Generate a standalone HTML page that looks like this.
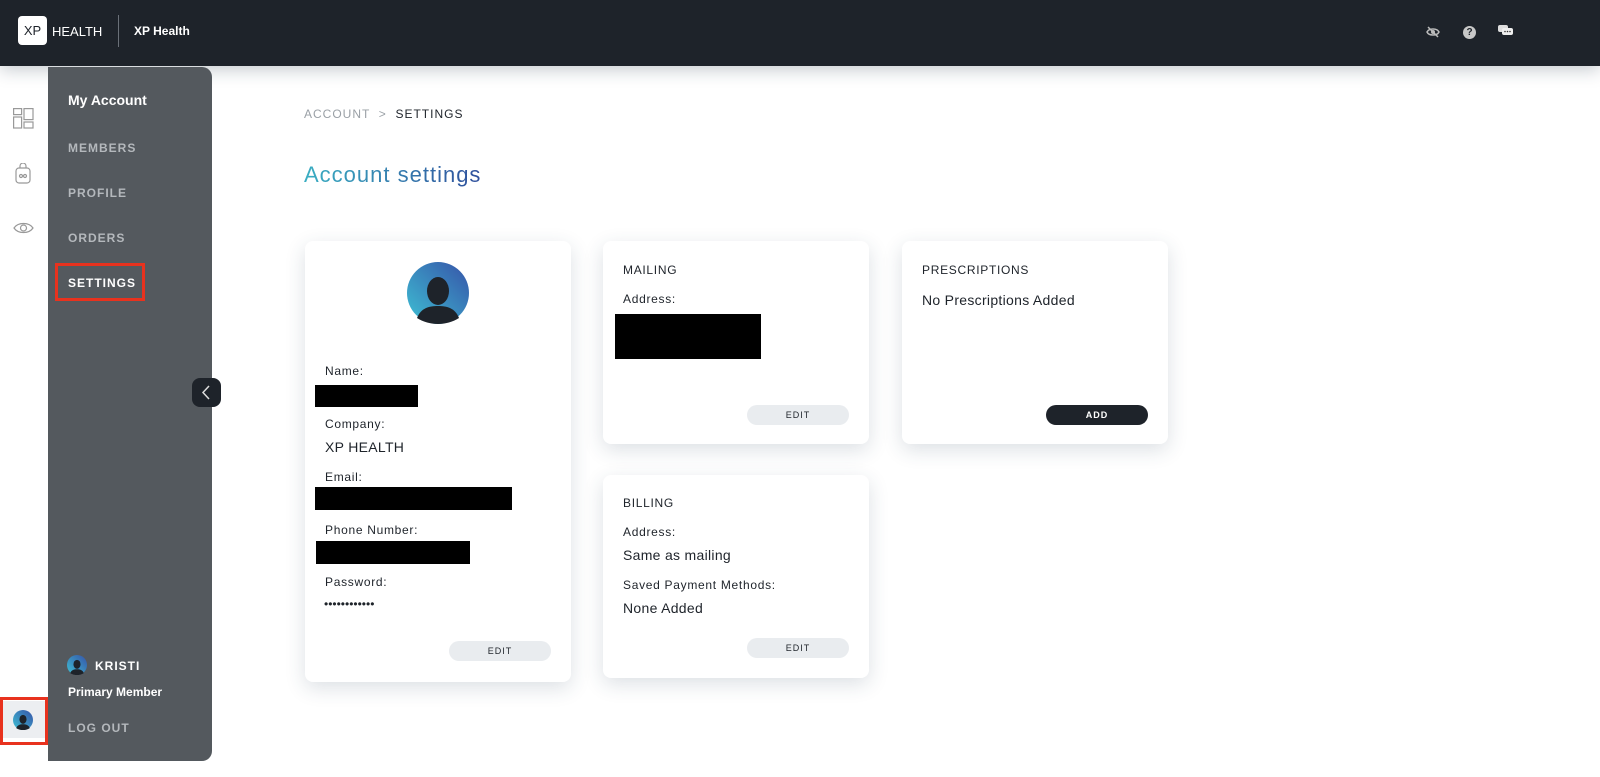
<!DOCTYPE html>
<html><head><meta charset="utf-8"><style>
*{box-sizing:border-box;margin:0;padding:0}
body{width:1600px;height:777px;overflow:hidden;background:#fff;font-family:"Liberation Sans",sans-serif;position:relative;color:#1e232a}
.hdr{position:absolute;left:0;top:0;width:1600px;height:66px;background:#1e232a;box-shadow:0 4px 16px rgba(30,50,70,.25)}
.logo{position:absolute;left:18px;top:16px;width:29px;height:29px;background:#fff;border-radius:4px;font-size:13px;color:#1e232a;text-align:center;line-height:29px}
.abs{position:absolute}
.side{position:absolute;left:48px;top:67px;width:164px;height:694px;background:#54595e;border-radius:0 10px 10px 0}
.nav{position:absolute;left:20px;font-size:12px;letter-spacing:1px;color:#b4b8bc;font-weight:bold}
.card{position:absolute;background:#fff;border-radius:8px;box-shadow:0 6px 20px rgba(40,60,90,.16)}
.lbl{position:absolute;font-size:12px;letter-spacing:.7px;color:#1e232a}
.val{position:absolute;font-size:14px;letter-spacing:.3px;color:#1e232a}
.blk{position:absolute;background:#000}
.btn{position:absolute;width:102px;height:20px;border-radius:10px;background:#e9ecef;font-size:9px;letter-spacing:1px;text-align:center;line-height:20px;color:#1e232a}
</style></head><body>
<div class="hdr">
 <div class="logo">XP</div>
 <div class="abs" style="left:52px;top:24px;color:#fff;font-size:13px">HEALTH</div>
 <div class="abs" style="left:118px;top:15px;width:1px;height:32px;background:#6a7078"></div>
 <div class="abs" style="left:134px;top:24px;color:#fff;font-size:12px;font-weight:bold">XP Health</div>
 <svg class="abs" style="left:1426px;top:26px" width="14" height="12" viewBox="0 0 14 12"><path d="M1 6C3 2 11 2 13 6C11 10 3 10 1 6Z" fill="none" stroke="#bbb" stroke-width="1.5"/><circle cx="7" cy="6" r="2" fill="#bbb"/><path d="M2 1L12 11" stroke="#bbb" stroke-width="1.5"/></svg>
 <div class="abs" style="left:1463px;top:26px;width:13px;height:13px;border-radius:50%;background:#c8c8c8;color:#1e232a;font-size:10px;font-weight:bold;text-align:center;line-height:13px">?</div>
 <svg class="abs" style="left:1498px;top:25px" width="16" height="13" viewBox="0 0 16 13"><rect x="0" y="0" width="10" height="7" rx="2" fill="#ddd"/><rect x="4" y="3" width="11" height="7" rx="2" fill="#eee"/><circle cx="7" cy="6.5" r=".8" fill="#333"/><circle cx="9.5" cy="6.5" r=".8" fill="#333"/><circle cx="12" cy="6.5" r=".8" fill="#333"/></svg>
</div>
<svg class="abs" style="left:13px;top:108px" width="21" height="21" viewBox="0 0 21 21" fill="none" stroke="#999" stroke-width="1.2"><rect x=".6" y=".6" width="8" height="6"/><rect x=".6" y="9" width="8" height="11"/><rect x="11" y=".6" width="9" height="11"/><rect x="11" y="14" width="9" height="6"/></svg>
<svg class="abs" style="left:15px;top:163px" width="16" height="21" viewBox="0 0 16 21" fill="none" stroke="#999" stroke-width="1.2"><path d="M5 5V3a3 3 0 0 1 6 0v2"/><rect x="1" y="5" width="14" height="15" rx="3"/><circle cx="6" cy="13" r="1.5"/><circle cx="10" cy="13" r="1.5"/></svg>
<svg class="abs" style="left:13px;top:221px" width="21" height="14" viewBox="0 0 21 14" fill="none" stroke="#999" stroke-width="1.2"><path d="M1 7C5 1 16 1 20 7C16 13 5 13 1 7Z"/><circle cx="10.5" cy="7" r="3"/></svg>
<div class="abs" style="left:2px;top:701px;width:45px;height:37px;background:#eceef1"></div>
<div class="abs" style="left:0;top:697px;width:48px;height:48px;border:3px solid #e8321e"></div>
<svg class="abs" style="left:13px;top:710px" width="20" height="20" viewBox="0 0 62 62"><defs><linearGradient id="g0" x1="0" y1="1" x2="1" y2="0"><stop offset="0" stop-color="#3ec0d4"/><stop offset="1" stop-color="#3653a8"/></linearGradient></defs><circle cx="31" cy="31" r="31" fill="url(#g0)"/><ellipse cx="31" cy="29" rx="11" ry="14" fill="#1e232a"/><path d="M10 56C14 46 22 44 31 44C40 44 48 46 52 56C46 60 38 62 31 62C24 62 16 60 10 56Z" fill="#1e232a"/></svg>
<div class="side">
 <div class="nav" style="top:25px;color:#fff;font-size:14px;letter-spacing:0">My Account</div>
 <div class="nav" style="top:74px">MEMBERS</div>
 <div class="nav" style="top:119px">PROFILE</div>
 <div class="nav" style="top:164px">ORDERS</div>
 <div class="nav" style="top:209px;color:#fff">SETTINGS</div>
 <div class="abs" style="left:7px;top:196px;width:90px;height:38px;border:3px solid #e8321e"></div>
 <svg class="abs" style="left:19px;top:588px" width="20" height="20" viewBox="0 0 62 62"><circle cx="31" cy="31" r="31" fill="url(#g0)"/><ellipse cx="31" cy="29" rx="11" ry="14" fill="#1e232a"/><path d="M10 56C14 46 22 44 31 44C40 44 48 46 52 56C46 60 38 62 31 62C24 62 16 60 10 56Z" fill="#1e232a"/></svg>
 <div class="nav" style="left:47px;top:592px;color:#fff">KRISTI</div>
 <div class="nav" style="top:618px;color:#fff;letter-spacing:0">Primary Member</div>
 <div class="nav" style="top:654px">LOG OUT</div>
</div>
<div class="abs" style="left:192px;top:378px;width:29px;height:29px;background:#1e232a;border-radius:8px"><svg width="29" height="29" viewBox="0 0 29 29"><path d="M17 8L11 14.5L17 21" fill="none" stroke="#ddd" stroke-width="1.5"/></svg></div>
<div class="abs" style="left:304px;top:107px;font-size:12px;letter-spacing:1px;color:#9aa0a6">ACCOUNT &nbsp;&gt;&nbsp; <span style="color:#1e232a">SETTINGS</span></div>
<div class="abs" style="left:304px;top:162px;font-size:22px;letter-spacing:1px;background:linear-gradient(90deg,#3aaec2,#2f4f9c);-webkit-background-clip:text;color:transparent;font-weight:500">Account settings</div>

<div class="card" style="left:305px;top:241px;width:266px;height:441px">
 <svg class="abs" style="left:102px;top:21px" width="62" height="62" viewBox="0 0 62 62"><circle cx="31" cy="31" r="31" fill="url(#g0)"/><ellipse cx="31" cy="29" rx="11" ry="14" fill="#1e232a"/><path d="M10 56C14 46 22 44 31 44C40 44 48 46 52 56C46 60 38 62 31 62C24 62 16 60 10 56Z" fill="#1e232a"/></svg>
 <div class="lbl" style="left:20px;top:123px">Name:</div>
 <div class="blk" style="left:10px;top:144px;width:103px;height:22px"></div>
 <div class="lbl" style="left:20px;top:176px">Company:</div>
 <div class="val" style="left:20px;top:198px">XP HEALTH</div>
 <div class="lbl" style="left:20px;top:229px">Email:</div>
 <div class="blk" style="left:10px;top:246px;width:197px;height:23px"></div>
 <div class="lbl" style="left:20px;top:282px">Phone Number:</div>
 <div class="blk" style="left:11px;top:300px;width:154px;height:23px"></div>
 <div class="lbl" style="left:20px;top:334px">Password:</div>
 <div class="val" style="left:19px;top:356px;font-size:12px;letter-spacing:0">••••••••••••</div>
 <div class="btn" style="left:144px;top:400px">EDIT</div>
</div>
<div class="card" style="left:603px;top:241px;width:266px;height:203px">
 <div class="lbl" style="left:20px;top:22px">MAILING</div>
 <div class="lbl" style="left:20px;top:51px">Address:</div>
 <div class="blk" style="left:12px;top:73px;width:146px;height:45px"></div>
 <div class="btn" style="left:144px;top:164px">EDIT</div>
</div>
<div class="card" style="left:902px;top:241px;width:266px;height:203px">
 <div class="lbl" style="left:20px;top:22px">PRESCRIPTIONS</div>
 <div class="val" style="left:20px;top:51px">No Prescriptions Added</div>
 <div class="btn" style="left:144px;top:164px;background:#1e232a;color:#fff;font-weight:bold">ADD</div>
</div>
<div class="card" style="left:603px;top:475px;width:266px;height:203px">
 <div class="lbl" style="left:20px;top:21px">BILLING</div>
 <div class="lbl" style="left:20px;top:50px">Address:</div>
 <div class="val" style="left:20px;top:72px">Same as mailing</div>
 <div class="lbl" style="left:20px;top:103px">Saved Payment Methods:</div>
 <div class="val" style="left:20px;top:125px">None Added</div>
 <div class="btn" style="left:144px;top:163px">EDIT</div>
</div>
</body></html>
